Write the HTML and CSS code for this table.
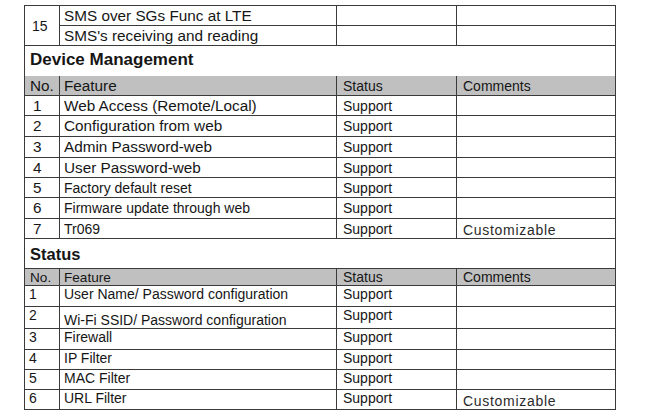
FILE: index.html
```html
<!DOCTYPE html>
<html>
<head>
<meta charset="utf-8">
<link rel="stylesheet" href="styles.css">
</head>
<body>
<table class="spec">
  <colgroup>
    <col class="c-no">
    <col class="c-feat">
    <col class="c-stat">
    <col class="c-com">
  </colgroup>
  <tbody>
    <tr class="r20">
      <td class="no no-mid" rowspan="2">15</td>
      <td class="feat big">SMS over SGs Func at LTE</td>
      <td></td>
      <td></td>
    </tr>
    <tr class="r20">
      <td class="feat big">SMS's receiving and reading</td>
      <td></td>
      <td></td>
    </tr>
    <tr class="sec sec-dm">
      <td colspan="4">Device Management</td>
    </tr>
    <tr class="head head-dm">
      <td class="no big">No.</td>
      <td class="feat big">Feature</td>
      <td class="stat">Status</td>
      <td class="com">Comments</td>
    </tr>
    <tr class="r20">
      <td class="no dm big">1</td>
      <td class="feat big">Web Access (Remote/Local)</td>
      <td class="stat">Support</td>
      <td></td>
    </tr>
    <tr class="r21">
      <td class="no dm big">2</td>
      <td class="feat big">Configuration from web</td>
      <td class="stat">Support</td>
      <td></td>
    </tr>
    <tr class="r21">
      <td class="no dm big">3</td>
      <td class="feat big">Admin Password-web</td>
      <td class="stat">Support</td>
      <td></td>
    </tr>
    <tr class="r20">
      <td class="no dm big">4</td>
      <td class="feat big">User Password-web</td>
      <td class="stat">Support</td>
      <td></td>
    </tr>
    <tr class="r20">
      <td class="no dm big">5</td>
      <td class="feat">Factory default reset</td>
      <td class="stat">Support</td>
      <td></td>
    </tr>
    <tr class="r21">
      <td class="no dm big">6</td>
      <td class="feat">Firmware update through web</td>
      <td class="stat">Support</td>
      <td></td>
    </tr>
    <tr class="r20">
      <td class="no dm big">7</td>
      <td class="feat">Tr069</td>
      <td class="stat">Support</td>
      <td class="com custom">Customizable</td>
    </tr>
    <tr class="sec sec-st">
      <td colspan="4">Status</td>
    </tr>
    <tr class="head head-st">
      <td class="no sm">No.</td>
      <td class="feat sm">Feature</td>
      <td class="stat">Status</td>
      <td class="com">Comments</td>
    </tr>
    <tr class="r21 st">
      <td class="no st-no">1</td>
      <td class="feat">User Name/ Password configuration</td>
      <td class="stat">Support</td>
      <td></td>
    </tr>
    <tr class="r20 st">
      <td class="no st-no">2</td>
      <td class="feat low">Wi-Fi SSID/ Password configuration</td>
      <td class="stat">Support</td>
      <td></td>
    </tr>
    <tr class="r21 st">
      <td class="no st-no">3</td>
      <td class="feat">Firewall</td>
      <td class="stat">Support</td>
      <td></td>
    </tr>
    <tr class="r20 st">
      <td class="no st-no">4</td>
      <td class="feat">IP Filter</td>
      <td class="stat">Support</td>
      <td></td>
    </tr>
    <tr class="r20 st">
      <td class="no st-no">5</td>
      <td class="feat">MAC Filter</td>
      <td class="stat">Support</td>
      <td></td>
    </tr>
    <tr class="r20 st">
      <td class="no st-no">6</td>
      <td class="feat">URL Filter</td>
      <td class="stat">Support</td>
      <td class="com custom">Customizable</td>
    </tr>
  </tbody>
</table>
</body>
</html>
```

FILE: styles.css
```css
html, body {
  margin: 0;
  padding: 0;
  background: #ffffff;
}

body {
  padding: 5px 0 0 24px;
  font-family: "Liberation Sans", Arial, sans-serif;
  color: #161616;
}

.spec {
  border-collapse: collapse;
  table-layout: fixed;
  width: 591px;
  font-size: 14px;
}

.c-no { width: 35px; }
.c-feat { width: 277px; }
.c-stat { width: 120px; }
.c-com { width: 159px; }

.spec td {
  border: 1px solid #3a3a3a;
  padding: 0;
  line-height: 16px;
  vertical-align: middle;
  white-space: nowrap;
  overflow: hidden;
}

.spec .r20 td { height: 19px; }
.spec .r21 td { height: 20px; }

.big { font-size: 15.3px; }
.sm { font-size: 13.6px; }

.spec td.no { padding-left: 5px; }
.spec td.no.dm { padding-left: 8px; }
.spec td.no.no-mid { padding-left: 7px; }

.spec td.feat { padding-left: 4px; }
.spec td.stat { padding-left: 6px; }
.spec td.com { padding-left: 6px; }

.spec .st td { vertical-align: top; }
.spec .st td.no { padding-left: 4px; }
.spec .st td.feat.low { padding-top: 5px; height: 14px; }

.spec td.custom {
  letter-spacing: 0.7px;
  vertical-align: bottom;
  color: #2a2a2a;
}

.spec .sec td {
  font-weight: bold;
  font-size: 17px;
  line-height: 20px;
  vertical-align: top;
  padding-left: 5px;
  border-bottom: none;
}

.spec .sec-dm td { height: 26px; padding-top: 4px; }
.spec .sec-st td { height: 24px; padding-top: 5px; font-size: 16.5px; }

.spec .head td {
  background: #c0c0c0;
}

.spec .head-dm td { height: 19px; border-top: none; }
.spec .head-st td { height: 16px; line-height: 15px; }
```
